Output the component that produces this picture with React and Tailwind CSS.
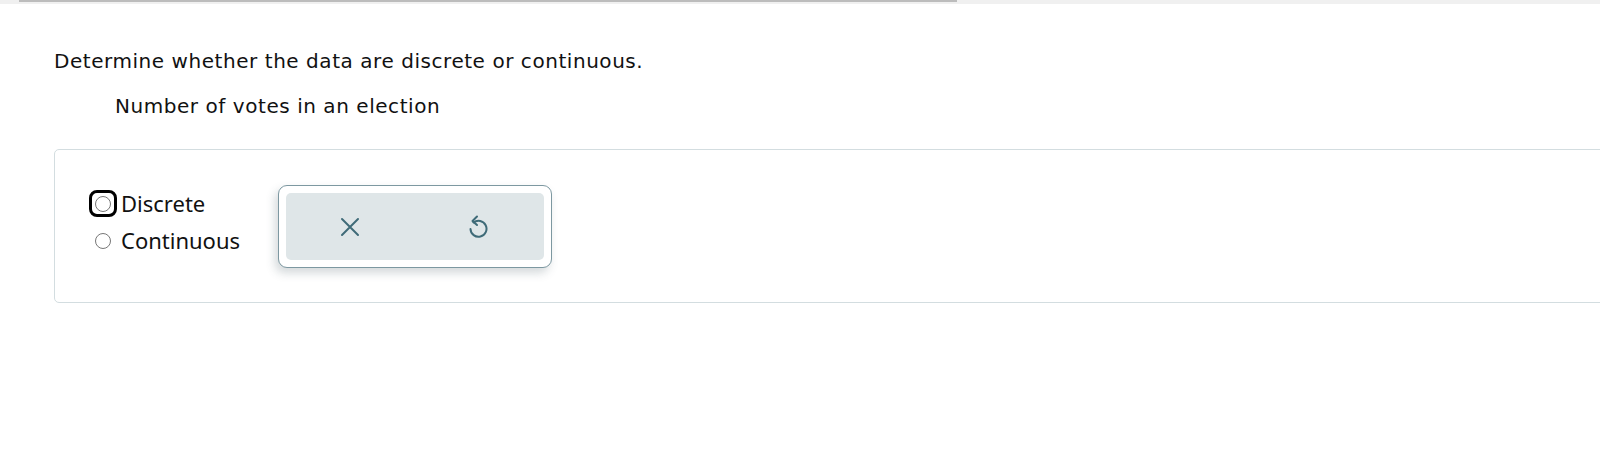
import React, { useState } from 'react';

const XIcon = () => (
  <svg width="20" height="20" viewBox="0 0 20 20" fill="none" stroke="#3f6b78" strokeWidth="2" strokeLinecap="round">
    <path d="M2 2 L18 18 M18 2 L2 18" />
  </svg>
);

const UndoIcon = () => (
  <svg width="20" height="26" viewBox="0 0 20 26" fill="none" stroke="#3f6b78" strokeWidth="2" strokeLinecap="round" strokeLinejoin="round">
    <path d="M5.5 8.5 A8 8 0 1 1 2.5 15" />
    <path d="M9 2.5 L4.5 7 L9 11" />
  </svg>
);

const Radio = ({ label, focused, checked, onChange }) => (
  <label className="flex items-center h-[37px] cursor-pointer">
    <span
      className={`flex items-center justify-center w-[28px] h-[27px] rounded-[8px] border-[3px] ${
        focused ? 'border-black' : 'border-transparent'
      }`}
    >
      <span className="w-[16px] h-[16px] rounded-full border border-[#777] bg-white flex items-center justify-center">
        {checked && <span className="w-[8px] h-[8px] rounded-full bg-[#333]" />}
      </span>
    </span>
    <input type="radio" className="hidden" checked={checked} onChange={onChange} />
    <span className="ml-[4px] text-[22px] text-[#111] font-['Noto_Sans',sans-serif]">{label}</span>
  </label>
);

export default function App() {
  const [choice, setChoice] = useState(null);

  return (
    <div className="w-[1600px] h-[449px] bg-white overflow-hidden font-['DejaVu_Sans',sans-serif]">
      <div className="h-[4px] bg-[#f0f0f0]">
        <div className="ml-[19px] w-[938px] h-[2px] bg-[#bcbcbc]" />
      </div>

      <div className="pl-[54px] pt-[45px]">
        <p className="text-[20px] leading-[24px] tracking-[0.55px] text-[#111]">
          Determine whether the data are discrete or continuous.
        </p>
        <p className="mt-[21px] pl-[61px] text-[20px] leading-[24px] tracking-[0.55px] text-[#111]">
          Number of votes in an election
        </p>

        <div className="mt-[31px] w-[1580px] h-[154px] border border-[#d3dde0] rounded-[5px] flex items-start pl-[34px] pt-[35px]">
          <div className="w-[189px]">
            <Radio label="Discrete" focused checked={choice === 'd'} onChange={() => setChoice('d')} />
            <Radio label="Continuous" checked={choice === 'c'} onChange={() => setChoice('c')} />
          </div>

          <div className="w-[274px] h-[83px] p-[7px] bg-white border border-[#7d98a1] rounded-[9px] shadow-[-3px_5px_10px_rgba(60,80,90,0.22)]">
            <div className="h-full flex bg-[#dfe6e8] rounded-[5px]">
              <button className="flex-1 flex items-center justify-center" onClick={() => setChoice(null)}>
                <XIcon />
              </button>
              <button className="flex-1 flex items-center justify-center pr-[2px]" onClick={() => setChoice(null)}>
                <UndoIcon />
              </button>
            </div>
          </div>
        </div>
      </div>
    </div>
  );
}
